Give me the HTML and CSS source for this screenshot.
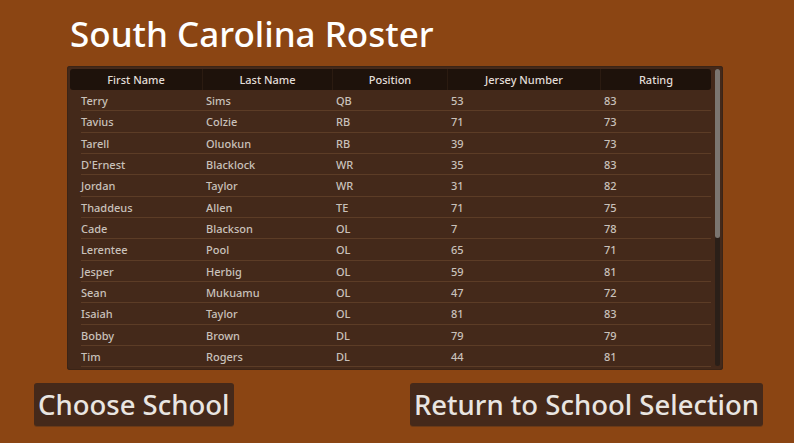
FILE: index.html
```html
<!DOCTYPE html>
<html>
<head>
<meta charset="utf-8">
<link rel="stylesheet" href="styles.css">
</head>
<body>
<div class="screen">
  <h1 class="title">South Carolina Roster</h1>
  <div class="panel">
    <div class="tree">
      <div class="head">
        <div class="hc c1">First Name</div>
        <div class="hc c2">Last Name</div>
        <div class="hc c3">Position</div>
        <div class="hc c4">Jersey Number</div>
        <div class="hc c5">Rating</div>
      </div>
      <div class="rows">
        <div class="row"><span class="c1">Terry</span><span class="c2">Sims</span><span class="c3">QB</span><span class="c4">53</span><span class="c5">83</span></div>
        <div class="row"><span class="c1">Tavius</span><span class="c2">Colzie</span><span class="c3">RB</span><span class="c4">71</span><span class="c5">73</span></div>
        <div class="row"><span class="c1">Tarell</span><span class="c2">Oluokun</span><span class="c3">RB</span><span class="c4">39</span><span class="c5">73</span></div>
        <div class="row"><span class="c1">D'Ernest</span><span class="c2">Blacklock</span><span class="c3">WR</span><span class="c4">35</span><span class="c5">83</span></div>
        <div class="row"><span class="c1">Jordan</span><span class="c2">Taylor</span><span class="c3">WR</span><span class="c4">31</span><span class="c5">82</span></div>
        <div class="row"><span class="c1">Thaddeus</span><span class="c2">Allen</span><span class="c3">TE</span><span class="c4">71</span><span class="c5">75</span></div>
        <div class="row"><span class="c1">Cade</span><span class="c2">Blackson</span><span class="c3">OL</span><span class="c4">7</span><span class="c5">78</span></div>
        <div class="row"><span class="c1">Lerentee</span><span class="c2">Pool</span><span class="c3">OL</span><span class="c4">65</span><span class="c5">71</span></div>
        <div class="row"><span class="c1">Jesper</span><span class="c2">Herbig</span><span class="c3">OL</span><span class="c4">59</span><span class="c5">81</span></div>
        <div class="row"><span class="c1">Sean</span><span class="c2">Mukuamu</span><span class="c3">OL</span><span class="c4">47</span><span class="c5">72</span></div>
        <div class="row"><span class="c1">Isaiah</span><span class="c2">Taylor</span><span class="c3">OL</span><span class="c4">81</span><span class="c5">83</span></div>
        <div class="row"><span class="c1">Bobby</span><span class="c2">Brown</span><span class="c3">DL</span><span class="c4">79</span><span class="c5">79</span></div>
        <div class="row"><span class="c1">Tim</span><span class="c2">Rogers</span><span class="c3">DL</span><span class="c4">44</span><span class="c5">81</span></div>
      </div>
    </div>
    <div class="scrollbar"><div class="thumb"></div></div>
  </div>
  <div class="buttons">
    <div class="btn">Choose School</div>
    <div class="btn">Return to School Selection</div>
  </div>
</div>
</body>
</html>
```
FILE: styles.css
```css
html, body {
  margin: 0;
  padding: 0;
  background: #8b4513;
}
.screen {
  width: 794px;
  height: 443px;
  overflow: hidden;
  font-family: "Noto Sans", "Open Sans", sans-serif;
  display: flex;
  flex-direction: column;
}
.title {
  margin: 12px 0 0 70px;
  font-size: 35px;
  font-weight: 500;
  line-height: 44px;
  height: 44px;
  color: #ffffff;
}
.panel {
  margin: 10px 0 0 67px;
  width: 650px;
  height: 298px;
  padding: 3px;
  background: #44291a;
  border-radius: 3px;
  box-shadow: inset 0 0 0 1px #3b2416;
  display: flex;
  gap: 4px;
}
.tree {
  width: 641px;
  display: flex;
  flex-direction: column;
}
.head {
  height: 21px;
  background: #1e120b;
  border-radius: 3px;
  display: flex;
}
.hc {
  color: #e2ddd8;
  font-size: 11px;
  font-weight: 500;
  line-height: 21px;
  text-align: center;
  box-sizing: border-box;
  border-right: 1px solid #2b1b11;
}
.hc.c5 { border-right: none; }
.c1 { width: 133px; }
.c2 { width: 130px; }
.c3 { width: 115px; }
.c4 { width: 153px; }
.c5 { width: 110px; }
.rows {
  display: flex;
  flex-direction: column;
}
.row {
  height: 21.33px;
  box-sizing: border-box;
  display: flex;
  align-items: center;
  position: relative;
  color: #c9c1ba;
  font-size: 11px;
  font-weight: 500;
}
.row::after {
  content: "";
  position: absolute;
  left: 11px;
  right: 0;
  bottom: 0;
  height: 1px;
  background: #5c3c26;
}
.row span {
  box-sizing: border-box;
  padding-left: 3px;
}
.row span.c1 { padding-left: 11px; }
.scrollbar {
  width: 6px;
  height: 297px;
  background: #2b1f18;
  border-radius: 3px;
  display: flex;
  flex-direction: column;
}
.thumb {
  height: 169px;
  background: #7b7570;
  border-radius: 3px;
}
.buttons {
  margin-top: 13px;
  padding: 0 31px 0 34px;
  display: flex;
  justify-content: space-between;
}
.btn {
  height: 43px;
  line-height: 43px;
  padding: 0 4px;
  background: #45291a;
  border-radius: 3px;
  color: #e9e5e1;
  font-size: 27.5px;
  font-weight: 500;
  box-shadow: 0 1px 0 #6b3a17;
}
```
